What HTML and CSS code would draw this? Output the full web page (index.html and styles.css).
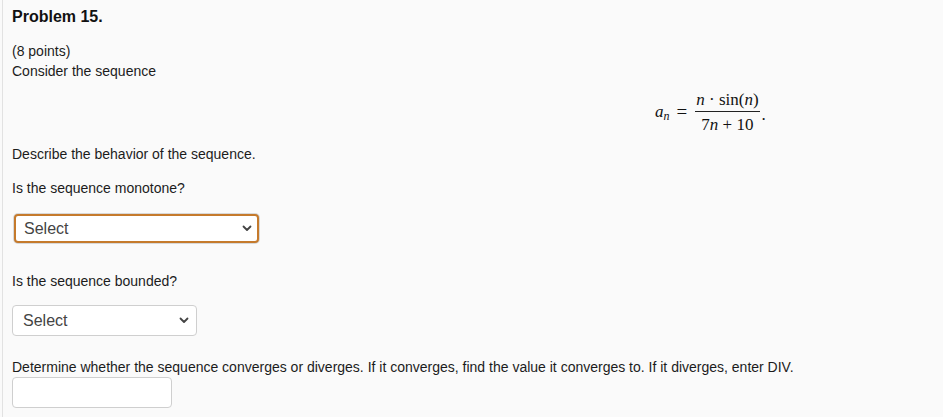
FILE: index.html
```html
<!DOCTYPE html>
<html>
<head>
<meta charset="utf-8">
<link rel="stylesheet" href="styles.css">
</head>
<body>
<div class="page">
  <h3 class="title">Problem 15.</h3>
  <div class="text points">(8 points)</div>
  <div class="text">Consider the sequence</div>
  <div class="math">
    <span class="mi">a<sub>n</sub></span>
    <span class="eq">=</span>
    <span class="frac">
      <span class="num"><i>n</i> · sin(<i>n</i>)</span>
      <span class="den">7<i>n</i> + 10</span>
    </span>
    <span class="dot">.</span>
  </div>
  <div class="text describe">Describe the behavior of the sequence.</div>
  <div class="text q">Is the sequence monotone?</div>
  <div class="sel sel-focus">
    <span>Select</span>
    <svg width="10" height="7" viewBox="0 0 10 7"><path d="M1.5 1.5 L5 5 L8.5 1.5" fill="none" stroke="#444" stroke-width="1.8" stroke-linecap="round" stroke-linejoin="round"/></svg>
  </div>
  <div class="text q2">Is the sequence bounded?</div>
  <div class="sel sel-plain">
    <span>Select</span>
    <svg width="10" height="7" viewBox="0 0 10 7"><path d="M1.5 1.5 L5 5 L8.5 1.5" fill="none" stroke="#444" stroke-width="1.8" stroke-linecap="round" stroke-linejoin="round"/></svg>
  </div>
  <div class="text q3">Determine whether the sequence converges or diverges. If it converges, find the value it converges to. If it diverges, enter DIV.</div>
  <div class="answer"></div>
</div>
</body>
</html>
```
FILE: styles.css
```css
html, body {
  margin: 0;
  padding: 0;
  background: #fafafa;
}
body {
  font-family: "Liberation Sans", Arial, sans-serif;
  color: #1c1c1c;
}
.page {
  margin-left: 2px;
  border-left: 1px solid #e2e2e2;
  padding: 5px 0 0 9px;
  height: 412px;
}
.title {
  margin: 0;
  font-size: 16px;
  font-weight: bold;
  line-height: 24px;
  color: #111;
}
.text {
  font-size: 14px;
  line-height: 20px;
}
.points {
  margin-top: 12px;
}
.math {
  font-family: "Liberation Serif", "Times New Roman", serif;
  font-size: 17px;
  display: flex;
  align-items: center;
  padding-left: 643px;
  height: 62px;
  color: #111;
}
.mi {
  font-style: italic;
  line-height: 18px;
}
.mi sub {
  font-size: 12px;
  vertical-align: -3px;
  line-height: 0;
}
.eq {
  margin: 0 8px 0 7px;
  font-size: 19px;
  line-height: 18px;
}
.frac {
  display: inline-flex;
  flex-direction: column;
  align-items: center;
  margin-top: 0;
}
.num {
  padding: 0 1px 2px;
  border-bottom: 1px solid #222;
  line-height: 18px;
}
.den {
  padding: 4px 1px 0;
  line-height: 18px;
}
.dot {
  margin-left: 2px;
  margin-top: 6px;
  line-height: 18px;
}
.describe {
  margin-top: 1px;
}
.q {
  margin-top: 14px;
}
.sel {
  box-sizing: border-box;
  display: flex;
  align-items: center;
  justify-content: space-between;
  background: #fff;
  font-size: 16px;
  color: #444;
  border-radius: 4px;
}
.sel-focus {
  margin-top: 16px;
  width: 245px;
  height: 29px;
  border: 2px solid #c57a2c;
  box-shadow: 0 0 0 1px #d8d8d8;
  padding: 0 5px 0 8px;
  margin-left: 2px;
}
.q2 {
  margin-top: 28px;
}
.sel-plain {
  margin-top: 14px;
  width: 185px;
  height: 31px;
  border: 1px solid #cfcfcf;
  padding: 0 7px 0 10px;
}
.q3 {
  margin-top: 21px;
}
.answer {
  box-sizing: border-box;
  width: 160px;
  height: 31px;
  border: 1px solid #cfcfcf;
  border-radius: 4px;
  background: #fff;
}
```
